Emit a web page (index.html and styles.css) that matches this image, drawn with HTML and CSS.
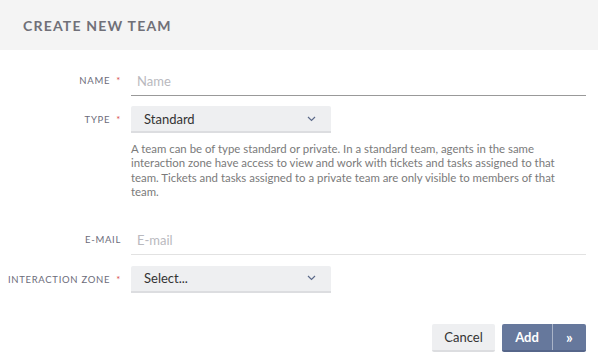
FILE: index.html
```html
<!DOCTYPE html>
<html lang="en">
<head>
    <meta charset="UTF-8">
    <meta name="viewport" content="width=device-width, initial-scale=1.0">
    <title>Create new team</title>
    <link rel="stylesheet" href="styles.css">
</head>
<body>
    <div class="cabecera">
        <h1>Create new team</h1>
    </div>
    <form class="formulario">
        <div class="fila">
            <label class="etiqueta">Name <span class="req">*</span></label>
            <input class="campo campo-activo" type="text" placeholder="Name">
        </div>
        <div class="fila">
            <label class="etiqueta">Type <span class="req">*</span></label>
            <div>
                <div class="selector">
                    <span>Standard</span>
                    <svg width="9" height="6" viewBox="0 0 9 6"><path d="M1 1l3.5 3.5L8 1" fill="none" stroke="#5c6a8a" stroke-width="1.2"/></svg>
                </div>
                <p class="ayuda">A team can be of type standard or private. In a standard team, agents in the same interaction zone have access to view and work with tickets and tasks assigned to that team. Tickets and tasks assigned to a private team are only visible to members of that team.</p>
            </div>
        </div>
        <div class="fila fila-email">
            <label class="etiqueta">E-mail</label>
            <input class="campo" type="text" placeholder="E-mail">
        </div>
        <div class="fila">
            <label class="etiqueta">Interaction zone <span class="req">*</span></label>
            <div class="selector">
                <span>Select...</span>
                <svg width="9" height="6" viewBox="0 0 9 6"><path d="M1 1l3.5 3.5L8 1" fill="none" stroke="#5c6a8a" stroke-width="1.2"/></svg>
            </div>
        </div>
        <div class="acciones">
            <button type="button" class="cancelar">Cancel</button>
            <div class="agregar">
                <button type="button">Add</button>
                <button type="button" class="mas">&raquo;</button>
            </div>
        </div>
    </form>
</body>
</html>
```

FILE: styles.css
```css
body {
    margin: 0;
    background-color: #fff;
    font-family: Lato, "Open Sans", sans-serif;
    color: #333;
}
.cabecera {
    background-color: #f4f4f4;
    height: 50px;
    display: flex;
    align-items: center;
    padding-left: 23px;
}
.cabecera h1 {
    margin: 0;
    font-size: 14px;
    font-weight: 700;
    letter-spacing: 1.2px;
    text-transform: uppercase;
    color: #707078;
}
.formulario {
    padding: 17px 12px 0 0;
}
.fila {
    display: grid;
    grid-template-columns: 121px 1fr;
    column-gap: 10px;
    align-items: start;
    margin-bottom: 10px;
}
.fila-email {
    margin-top: 26px;
    margin-bottom: 11px;
}
.etiqueta {
    text-align: right;
    font-size: 9.5px;
    letter-spacing: 0.7px;
    text-transform: uppercase;
    color: #6c6c7a;
    line-height: 28px;
}
.req {
    color: #d9534f;
    margin-left: 3px;
}
.campo {
    border: none;
    border-bottom: 1px solid #e2e2e2;
    padding: 0 6px;
    font-family: inherit;
    font-size: 13px;
    color: #333;
    outline: none;
    box-sizing: border-box;
    width: 100%;
    height: 29px;
}
.campo::placeholder {
    color: #b9b9be;
}
.campo-activo {
    border-bottom-color: #999;
}
.selector {
    width: 200px;
    height: 27px;
    box-sizing: border-box;
    background-color: #eeeff1;
    border-bottom: 2px solid #dcdde0;
    border-radius: 2px 2px 0 0;
    display: flex;
    justify-content: space-between;
    align-items: center;
    padding: 0 15px 0 13px;
    font-size: 13px;
    color: #333;
}
.ayuda {
    margin: 9px 0 0;
    font-size: 11.4px;
    line-height: 14.4px;
    color: #7a7a7a;
    max-width: 432px;
}
.acciones {
    display: flex;
    justify-content: flex-end;
    gap: 7px;
    margin-top: 30px;
}
button {
    border: none;
    font-family: inherit;
    font-size: 13px;
    height: 28px;
    cursor: pointer;
    border-radius: 2px;
}
.cancelar {
    width: 63px;
    background-color: #eeeff1;
    border-bottom: 2px solid #dcdde0;
    color: #333;
}
.agregar {
    display: flex;
    background-color: #66789c;
    border-bottom: 2px solid #56668a;
    border-radius: 2px;
}
.agregar button {
    background: none;
    color: #fff;
    font-weight: 700;
    height: 26px;
    width: 50px;
}
.agregar .mas {
    width: 34px;
    border-left: 1px solid #aab4c8;
    border-radius: 0;
    font-size: 15px;
}
```
